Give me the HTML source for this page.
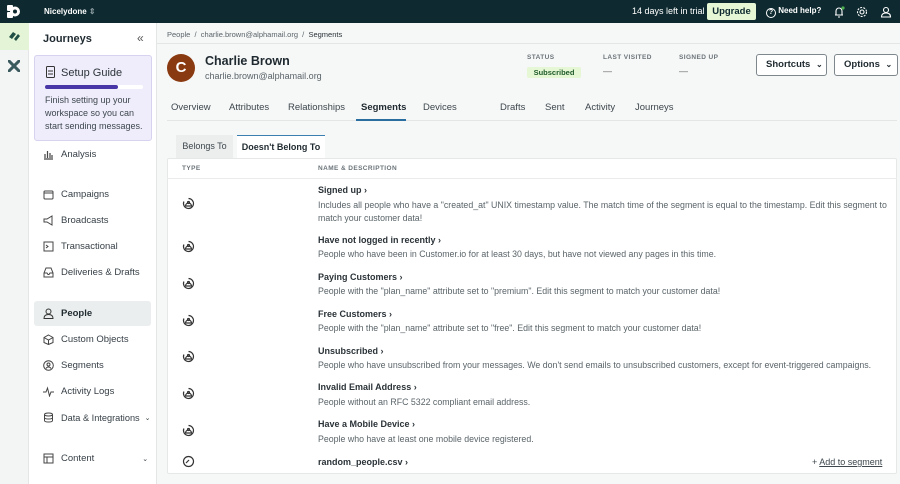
<!DOCTYPE html>
<html><head><meta charset="utf-8"><style>
*{box-sizing:border-box;margin:0;padding:0}
body{width:900px;height:484px;overflow:hidden;font-family:"Liberation Sans",sans-serif;background:#f6f7f7;position:relative;color:#1f2a30}
.a{position:absolute;white-space:nowrap}
.top{left:0;top:0;width:900px;height:23px;background:#0e2a30;color:#fff}
.rail{left:0;top:23px;width:29px;height:461px;background:#f3f4f4;border-right:1px solid #e3e5e6}
.side{left:29px;top:23px;width:128px;height:461px;background:#fff;border-right:1px solid #e3e5e6}
.nav{position:absolute;left:5px;width:117px;height:25px;font-size:9.5px;color:#374047;display:flex;align-items:center;padding-left:9px;white-space:nowrap}
.nav svg{margin-right:7px;flex:none}
.tab{position:absolute;top:102px;font-size:9.5px;color:#3d474d;white-space:nowrap}
.hd{font-size:6.5px;color:#6b7479;letter-spacing:.4px;font-weight:bold}
.t{position:absolute;left:318px;font-size:9px;font-weight:bold;color:#2b3338;white-space:nowrap}
.d{position:absolute;left:318px;font-size:8.8px;color:#5a6469;line-height:13px;width:575px}
</style></head><body>
<div class="a top">
 <svg class="a" style="left:7px;top:5px" width="13" height="13" viewBox="0 0 13 13"><rect x="0" y="0" width="6" height="6" rx="1" fill="#fff"/><rect x="0" y="7" width="6" height="6" rx="1" fill="#fff"/><circle cx="8" cy="6.5" r="5" fill="#fff"/><circle cx="8" cy="6.5" r="2" fill="#0e2a30"/></svg>
 <div class="a" style="left:44px;top:7px;font-size:8px;font-weight:bold">Nicelydone <span style="color:#8a9a9e">⇕</span></div>
 <div class="a" style="left:632px;top:6px;font-size:9px">14 days left in trial</div>
 <div class="a" style="left:707px;top:3px;width:49px;height:17px;background:#e5f7d4;color:#0e2a30;border-radius:2px;font-size:9.5px;font-weight:bold;text-align:center;line-height:17px">Upgrade</div>
 <div class="a" style="left:766px;top:6px;font-size:8px;font-weight:bold"><span style="display:inline-block;width:10px;height:10px;border:1.2px solid #fff;border-radius:50%;font-size:7px;text-align:center;line-height:8px;vertical-align:-1px">?</span> Need help?</div>
 <svg class="a" style="left:833px;top:6px" width="12" height="12" viewBox="0 0 12 12"><path d="M2 9h8M3 9V5a3 3 0 016 0v4M5 11h2" stroke="#fff" fill="none" stroke-width="1.1"/><circle cx="10" cy="2" r="1.6" fill="#4caf50"/></svg>
 <svg class="a" style="left:856px;top:6px" width="12" height="12" viewBox="0 0 12 12"><circle cx="6" cy="6" r="2" stroke="#fff" fill="none" stroke-width="1.1"/><circle cx="6" cy="6" r="4.5" stroke="#fff" fill="none" stroke-width="1.1" stroke-dasharray="2 1.2"/></svg>
 <svg class="a" style="left:880px;top:6px" width="12" height="12" viewBox="0 0 12 12"><circle cx="6" cy="4" r="2.5" stroke="#fff" fill="none" stroke-width="1.1"/><path d="M1.5 11c0-3 2-4 4.5-4s4.5 1 4.5 4z" stroke="#fff" fill="none" stroke-width="1.1"/></svg>
</div>
<div class="a rail">
 <div class="a" style="left:0;top:0;width:29px;height:27px;background:#e3f5d6"></div>
 <svg class="a" style="left:8px;top:8px" width="13" height="11" viewBox="0 0 13 11"><path d="M1 6l4-5 3 2-4 5z M6 8l4-5 2 2-4 5z" fill="#1f4f45"/></svg>
 <svg class="a" style="left:8px;top:37px" width="12" height="12" viewBox="0 0 12 12"><path d="M1 1l10 10M11 1L1 11" stroke="#3a5a5e" stroke-width="3" stroke-linecap="round"/></svg>
</div>
<div class="a side">
 <div class="a" style="left:14px;top:10px;font-size:11px;font-weight:bold;color:#1f2a30">Journeys</div>
 <div class="a" style="left:108px;top:8px;font-size:12px;color:#555">«</div>
 <div class="a" style="left:5px;top:32px;width:118px;height:86px;background:#efedfb;border:1px solid #d6d2ef;border-radius:3px;white-space:normal">
  <svg class="a" style="left:11px;top:10px" width="9" height="12" viewBox="0 0 9 12"><rect x=".5" y=".5" width="8" height="11" rx="1" stroke="#333" fill="none"/><path d="M2 5h5M2 8h5" stroke="#333"/></svg>
  <div class="a" style="left:26px;top:11px;font-size:11px;color:#2b3338">Setup Guide</div>
  <div class="a" style="left:10px;top:29px;width:98px;height:4px;background:#fff;border-radius:2px"><div style="width:73px;height:4px;background:#4937a8;border-radius:2px"></div></div>
  <div style="position:absolute;left:10px;top:38px;width:108px;font-size:9px;line-height:13px;color:#3d474d">Finish setting up your workspace so you can start sending messages.</div>
 </div>
 <div class="nav" style="top:119px"><svg width="11" height="11"><path d="M1 10h9M2 9V5M4.5 9V2M7 9V4M9 9V6" stroke="#444" stroke-width="1.2"/></svg>Analysis</div>
 <div class="nav" style="top:159px"><svg width="11" height="11"><rect x="1" y="2" width="9" height="8" rx="1" stroke="#444" fill="none"/><path d="M1 4h9" stroke="#444"/></svg>Campaigns</div>
 <div class="nav" style="top:185px"><svg width="11" height="11"><path d="M1 4h3l5-3v9L4 7H1z" stroke="#444" fill="none"/></svg>Broadcasts</div>
 <div class="nav" style="top:211px"><svg width="11" height="11"><rect x="1" y="1" width="9" height="9" stroke="#444" fill="none"/><path d="M3 4l2 1.5L3 7" stroke="#444" fill="none"/></svg>Transactional</div>
 <div class="nav" style="top:237px"><svg width="11" height="11"><path d="M1 6l2-5h5l2 5v4H1z M1 6h3l1 1.5h1L7 6h3" stroke="#444" fill="none"/></svg>Deliveries &amp; Drafts</div>
 <div class="nav" style="top:278px;background:#ebeeee;border-radius:3px;font-weight:bold;color:#1f2a30"><svg width="11" height="11"><circle cx="5.5" cy="3.5" r="2.5" stroke="#333" fill="none"/><path d="M1 10.5c0-3 2-4 4.5-4s4.5 1 4.5 4z" stroke="#333" fill="none"/></svg>People</div>
 <div class="nav" style="top:304px"><svg width="11" height="11"><path d="M5.5 1l4.5 2.5v5L5.5 10.5 1 8.5v-5zM1 3.5l4.5 2.5 4.5-2.5M5.5 6v4.5" stroke="#444" fill="none"/></svg>Custom Objects</div>
 <div class="nav" style="top:330px"><svg width="11" height="11"><circle cx="5.5" cy="5.5" r="4.8" stroke="#444" fill="none"/><circle cx="5.5" cy="4.5" r="1.5" stroke="#444" fill="none"/><path d="M3 8.5c1-2 4-2 5 0" stroke="#444" fill="none"/></svg>Segments</div>
 <div class="nav" style="top:356px"><svg width="11" height="11"><path d="M0 6h3l1.5-4 2 8L8 6h3" stroke="#444" fill="none"/></svg>Activity Logs</div>
 <div class="nav" style="top:382px;font-size:9.2px"><svg width="11" height="11"><ellipse cx="5.5" cy="2.5" rx="4" ry="1.5" stroke="#444" fill="none"/><path d="M1.5 2.5v6c0 2 8 2 8 0v-6M1.5 5.5c0 2 8 2 8 0" stroke="#444" fill="none"/></svg>Data &amp; Integrations <span style="margin-left:5px;font-size:7px">⌄</span></div>
 <div class="nav" style="top:423px"><svg width="11" height="11"><rect x="1" y="1" width="9" height="9" stroke="#444" fill="none"/><path d="M1 4h9M4 4v6" stroke="#444"/></svg>Content<span style="margin-left:48px;font-size:7px">⌄</span></div>
</div>
<div class="a" style="left:157px;top:23px;width:743px;height:21px;border-bottom:1px solid #e3e5e6;font-size:7.5px;color:#5a6469;padding:7px 0 0 10px">People &nbsp;/ &nbsp;charlie.brown@alphamail.org &nbsp;/ &nbsp;<span style="color:#2b3338">Segments</span></div>
<div class="a" style="left:167px;top:54px;width:28px;height:28px;border-radius:50%;background:#8a3a10;color:#fff;font-size:15px;font-weight:bold;text-align:center;line-height:28px">C</div>
<div class="a" style="left:205px;top:54px;font-size:12.5px;font-weight:bold">Charlie Brown</div>
<div class="a" style="left:205px;top:71px;font-size:9px;color:#5a6469">charlie.brown@alphamail.org</div>
<div class="a hd" style="left:527px;top:54px">STATUS</div>
<div class="a" style="left:527px;top:67px;width:54px;height:11px;background:#e5f7d4;color:#1e5a2a;font-size:7.5px;font-weight:bold;text-align:center;line-height:11px;border-radius:2px">Subscribed</div>
<div class="a hd" style="left:603px;top:54px">LAST VISITED</div><div class="a" style="left:603px;top:66px;font-size:9px;color:#666">—</div>
<div class="a hd" style="left:679px;top:54px">SIGNED UP</div><div class="a" style="left:679px;top:66px;font-size:9px;color:#666">—</div>
<div class="a" style="left:756px;top:54px;width:71px;height:22px;border:1px solid #7d878c;border-radius:3px;background:#fff;font-size:9.5px;font-weight:bold;line-height:20px;padding-left:9px">Shortcuts <span style="font-size:8px;margin-left:3px">⌄</span></div>
<div class="a" style="left:834px;top:54px;width:64px;height:22px;border:1px solid #7d878c;border-radius:3px;background:#fff;font-size:9.5px;font-weight:bold;line-height:20px;padding-left:9px">Options <span style="font-size:8px;margin-left:3px">⌄</span></div>
<div class="tab" style="left:171px">Overview</div><div class="tab" style="left:229px">Attributes</div><div class="tab" style="left:288px">Relationships</div>
<div class="tab" style="left:361px;font-weight:bold;color:#1f2a30">Segments</div><div class="tab" style="left:423px">Devices</div>
<div class="tab" style="left:500px">Drafts</div><div class="tab" style="left:545px">Sent</div><div class="tab" style="left:585px">Activity</div><div class="tab" style="left:635px">Journeys</div>
<div class="a" style="left:167px;top:120px;width:730px;height:1px;background:#e3e5e6"></div>
<div class="a" style="left:356px;top:119px;width:50px;height:2px;background:#2a6ea0"></div>
<div class="a" style="left:176px;top:135px;width:57px;height:23px;background:#eceeee;font-size:9px;color:#3d474d;text-align:center;line-height:23px">Belongs To</div>
<div class="a" style="left:237px;top:135px;width:88px;height:23px;background:#fff;border-top:1px solid #3b7fb0;font-size:9px;font-weight:bold;text-align:center;line-height:22px">Doesn't Belong To</div>
<div class="a" style="left:167px;top:158px;width:730px;height:316px;background:#fff;border:1px solid #e6e8e8;border-radius:2px"></div>
<div class="a" style="left:167px;top:178px;width:730px;height:1px;background:#eaecec"></div>
<div class="a hd" style="left:182px;top:165px">TYPE</div><div class="a hd" style="left:318px;top:165px">NAME &amp; DESCRIPTION</div>

<div class="t" style="top:185px">Signed up ›</div><div class="d" style="top:199px">Includes all people who have a "created_at" UNIX timestamp value. The match time of the segment is equal to the timestamp. Edit this segment to match your customer data!</div>
<div class="t" style="top:235px">Have not logged in recently ›</div><div class="d" style="top:248px">People who have been in Customer.io for at least 30 days, but have not viewed any pages in this time.</div>
<div class="t" style="top:272px">Paying Customers ›</div><div class="d" style="top:285px">People with the "plan_name" attribute set to "premium". Edit this segment to match your customer data!</div>
<div class="t" style="top:309px">Free Customers ›</div><div class="d" style="top:322px">People with the "plan_name" attribute set to "free". Edit this segment to match your customer data!</div>
<div class="t" style="top:346px">Unsubscribed ›</div><div class="d" style="top:359px">People who have unsubscribed from your messages. We don't send emails to unsubscribed customers, except for event-triggered campaigns.</div>
<div class="t" style="top:382px">Invalid Email Address ›</div><div class="d" style="top:396px">People without an RFC 5322 compliant email address.</div>
<div class="t" style="top:419px">Have a Mobile Device ›</div><div class="d" style="top:433px">People who have at least one mobile device registered.</div>
<div class="t" style="top:457px">random_people.csv ›</div>
<div class="a" style="left:812px;top:457px;font-size:9px;color:#3d474d">+ <u>Add to segment</u></div>

<svg class="a" style="left:182px;top:197px" width="13" height="280" viewBox="0 0 13 280">
<g stroke="#333" fill="none" stroke-width="1.2">
<g id="s"><path d="M6.5 1.5a5 5 0 1 1-4.6 3"/><path d="M3.5 9a3 3 0 0 1 6 0z"/><circle cx="6.5" cy="5.5" r="1"/></g>
<use href="#s" y="43"/><use href="#s" y="80"/><use href="#s" y="117"/><use href="#s" y="153"/><use href="#s" y="190"/><use href="#s" y="227"/>
<g transform="translate(0,258)"><circle cx="6.5" cy="6.5" r="5"/><path d="M4 8l3-3"/></g>
</g></svg>
</body></html>
